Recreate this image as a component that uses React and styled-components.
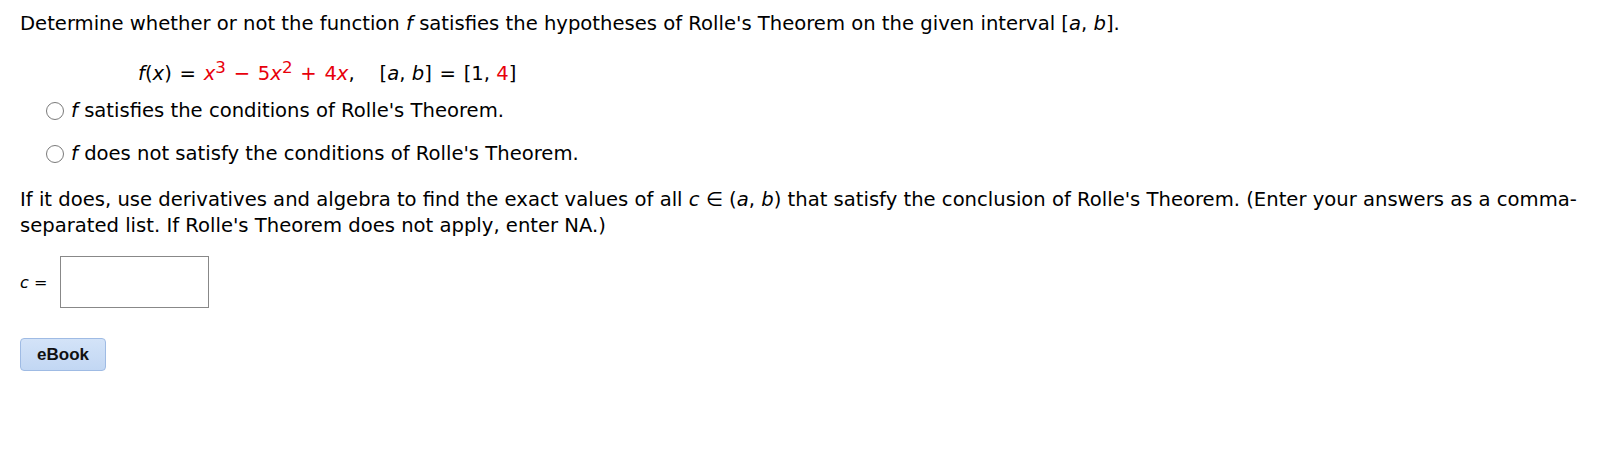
import styled, { createGlobalStyle } from "styled-components";

const GlobalStyle = createGlobalStyle`
  body {
    margin: 0;
    background: #fff;
    font-family: "DejaVu Sans", Verdana, sans-serif;
    font-size: 19.6px;
    color: #000;
  }
`;

const Page = styled.div`
  padding: 11px 20px 0 20px;
`;

const Prompt = styled.p`
  margin: 0;
  line-height: 26px;
`;

const Formula = styled.div`
  margin: 24px 0 0 118px;
  line-height: 26px;
  white-space: pre;
`;

const Red = styled.span`
  color: #e8000b;
`;

const Op = styled.span`
  margin: 0 1.5px;
`;

const Sup = styled.sup`
  font-size: 85%;
  line-height: 0;
  vertical-align: 0.45em;
`;

const Options = styled.div`
  display: flex;
  flex-direction: column;
  gap: 17px;
  margin: 11px 0 0 26px;
`;

const Option = styled.label`
  display: flex;
  align-items: center;
  gap: 7px;
  line-height: 26px;
`;

const Radio = styled.span`
  width: 16px;
  height: 16px;
  border: 1.5px solid #7a7a7a;
  border-radius: 50%;
  flex: none;
`;

const Para = styled.p`
  margin: 20px 0 0;
  line-height: 26px;
`;

const AnswerRow = styled.div`
  display: flex;
  align-items: center;
  gap: 13px;
  margin-top: 17px;
  font-size: 16px;
`;

const Box = styled.input`
  width: 147px;
  height: 50px;
  border: 1px solid #888;
  padding: 0;
  margin: 0;
  outline: none;
  box-sizing: content-box;
`;

const EbookButton = styled.button`
  margin-top: 30px;
  width: 86px;
  height: 33px;
  border: 1px solid #9fbbe4;
  border-radius: 4px;
  background: linear-gradient(#d3e3f8, #c2d7f3);
  font-family: "Liberation Sans", Arial, sans-serif;
  font-weight: bold;
  font-size: 17px;
  color: #111;
  cursor: pointer;
`;

export default function App() {
  return (
    <Page>
      <GlobalStyle />
      <Prompt>
        Determine whether or not the function <i>f</i> satisfies the hypotheses of Rolle's Theorem on the given interval [<i>a</i>, <i>b</i>].
      </Prompt>
      <Formula>
        <i>f</i>(<i>x</i>) <Op>=</Op> <Red><i>x</i><Sup>3</Sup> <Op>−</Op> 5<i>x</i><Sup>2</Sup> <Op>+</Op> 4<i>x</i></Red>,    [<i>a</i>, <i>b</i>] <Op>=</Op> [1, <Red>4</Red>]
      </Formula>
      <Options>
        <Option>
          <Radio />
          <span><i>f</i> satisfies the conditions of Rolle's Theorem.</span>
        </Option>
        <Option>
          <Radio />
          <span><i>f</i> does not satisfy the conditions of Rolle's Theorem.</span>
        </Option>
      </Options>
      <Para>
        If it does, use derivatives and algebra to find the exact values of all <i>c</i> ∈ (<i>a</i>, <i>b</i>) that satisfy the conclusion of Rolle's Theorem. (Enter your answers as a comma-separated list. If Rolle's Theorem does not apply, enter NA.)
      </Para>
      <AnswerRow>
        <span><i>c</i> =</span>
        <Box />
      </AnswerRow>
      <EbookButton>eBook</EbookButton>
    </Page>
  );
}
